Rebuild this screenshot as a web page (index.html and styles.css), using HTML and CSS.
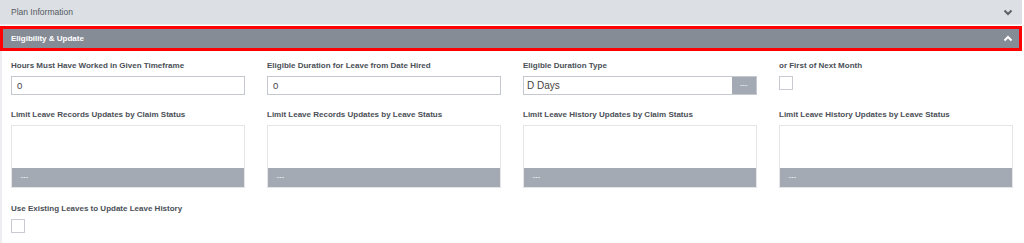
FILE: index.html
```html
<!DOCTYPE html>
<html>
<head>
<meta charset="utf-8">
<link rel="stylesheet" href="styles.css">
</head>
<body>
<div class="panel">
  <div class="bar bar-plan">
    <span class="bar-title">Plan Information</span>
    <svg class="chev" width="10" height="7" viewBox="0 0 10 7"><path d="M1.5 1.5 L5 5 L8.5 1.5" fill="none" stroke="#5b6069" stroke-width="2"/></svg>
  </div>
  <div class="bar bar-elig">
    <span class="bar-title">Eligibility &amp; Update</span>
    <svg class="chev" width="10" height="7" viewBox="0 0 10 7"><path d="M1.5 5.5 L5 2 L8.5 5.5" fill="none" stroke="#ffffff" stroke-width="2"/></svg>
  </div>
  <div class="body">
    <div class="grid">
      <div class="field">
        <div class="label">Hours Must Have Worked in Given Timeframe</div>
        <div class="input">0</div>
      </div>
      <div class="field">
        <div class="label">Eligible Duration for Leave from Date Hired</div>
        <div class="input">0</div>
      </div>
      <div class="field">
        <div class="label">Eligible Duration Type</div>
        <div class="select"><span class="select-val">D Days</span><span class="select-btn">---</span></div>
      </div>
      <div class="field">
        <div class="label">or First of Next Month</div>
        <div class="check"></div>
      </div>

      <div class="field">
        <div class="label">Limit Leave Records Updates by Claim Status</div>
        <div class="list"><div class="list-area"></div><div class="list-foot">---</div></div>
      </div>
      <div class="field">
        <div class="label">Limit Leave Records Updates by Leave Status</div>
        <div class="list"><div class="list-area"></div><div class="list-foot">---</div></div>
      </div>
      <div class="field">
        <div class="label">Limit Leave History Updates by Claim Status</div>
        <div class="list"><div class="list-area"></div><div class="list-foot">---</div></div>
      </div>
      <div class="field">
        <div class="label">Limit Leave History Updates by Leave Status</div>
        <div class="list"><div class="list-area"></div><div class="list-foot">---</div></div>
      </div>

      <div class="field field-last">
        <div class="label">Use Existing Leaves to Update Leave History</div>
        <div class="check"></div>
      </div>
    </div>
  </div>
</div>
</body>
</html>
```
FILE: styles.css
```css
* { box-sizing: border-box; }
html, body { margin: 0; padding: 0; background: #ffffff; }
body {
  font-family: "Liberation Sans", Arial, sans-serif;
  color: #333;
  width: 1024px;
  height: 243px;
  overflow: hidden;
}
.panel {
  width: 1022px;
}
.bar {
  display: flex;
  align-items: center;
  justify-content: space-between;
  padding: 0 9px 0 11px;
}
.bar-plan {
  height: 25px;
  background: #dcdfe3;
  border-bottom: 1px solid #eceef0;
}
.bar-plan .bar-title {
  font-size: 8.5px;
  color: #555a62;
}
.bar-elig {
  margin-top: 1px;
  height: 25px;
  background: #868c96;
  border: 3px solid #ff0000;
  padding-left: 8px;
  padding-right: 6px;
}
.bar-elig .bar-title {
  font-size: 8px;
  font-weight: bold;
  color: #ffffff;
}
.chev { display: block; }
.body {
  border-left: 2px solid #eceef1;
  padding: 9px 0 0 9px;
  height: 192px;
}
.grid {
  display: grid;
  grid-template-columns: repeat(4, 234px);
  column-gap: 22px;
  row-gap: 14px;
}
.field-last { margin-top: 1px; }
.field-last .check { margin-top: 1px; }
.label {
  font-size: 8px;
  font-weight: bold;
  color: #4a4f57;
  height: 12px;
  line-height: 12px;
  margin-bottom: 4px;
  white-space: nowrap;
}
.input {
  height: 19px;
  border: 1px solid #c5c9cf;
  font-size: 9.5px;
  line-height: 17px;
  padding-left: 5px;
  color: #444;
}
.select {
  height: 19px;
  border: 1px solid #c5c9cf;
  display: flex;
}
.select-val {
  flex: 1;
  font-size: 10px;
  line-height: 17px;
  padding-left: 3px;
  color: #444;
}
.select-btn {
  width: 24px;
  background: #a4aab3;
  color: #fff;
  font-size: 6px;
  font-weight: bold;
  letter-spacing: 0.5px;
  text-align: center;
  line-height: 17px;
}
.check {
  width: 14px;
  height: 14px;
  border: 1px solid #c8ccd2;
  background: #fff;
}
.list {
  height: 63px;
  border: 1px solid #e3e5e8;
  display: flex;
  flex-direction: column;
}
.list-area { flex: 1; background: #fff; }
.list-foot {
  height: 19px;
  background: #a4aab3;
  color: #fff;
  font-size: 6px;
  font-weight: bold;
  letter-spacing: 0.5px;
  line-height: 18px;
  padding-left: 9px;
}
```
